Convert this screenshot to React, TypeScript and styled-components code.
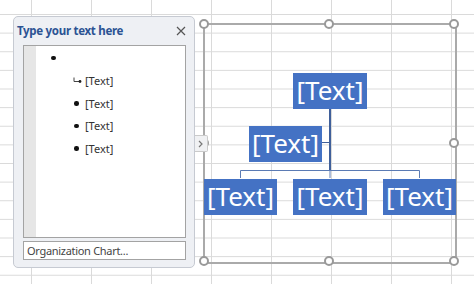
import styled, { createGlobalStyle } from "styled-components";

const GlobalStyle = createGlobalStyle`
    html, body {
        margin: 0;
        padding: 0;
    }
    body {
        width: 474px;
        height: 284px;
        overflow: hidden;
        font-family: "Noto Sans", "Open Sans", Arial, sans-serif;
        background-color: #ffffff;
        background-image:
            linear-gradient(to right, #dadada 1px, transparent 1px),
            linear-gradient(to bottom, #dadada 1px, transparent 1px);
        background-size: 60px 100%, 100% 18.64px;
        background-position: 31px 0, 0 14px;
    }
`

const Pagina = styled.div`
    display: flex;
    align-items: flex-start;
    padding: 16px 0 0 13px;
`

const Painel = styled.div`
    position: relative;
    z-index: 3;
    box-sizing: border-box;
    width: 182px;
    height: 252px;
    display: flex;
    flex-direction: column;
    padding: 0 8px 7px 3px;
    background: #eef0f4;
    border: 1px solid #c6cad2;
    border-radius: 5px;
`

const CabecalhoPainel = styled.div`
    height: 28px;
    display: flex;
    align-items: center;
    justify-content: space-between;
`

const TituloPainel = styled.span`
    font-size: 11.5px;
    font-weight: 700;
    color: #2c5393;
    letter-spacing: -0.3px;
`

const Fechar = styled.svg`
    width: 10px;
    height: 10px;
`

const AreaTexto = styled.div`
    margin-left: 6px;
    height: 193px;
    display: flex;
    background: #ffffff;
    border: 1px solid #a3a3a3;
`

const Faixa = styled.div`
    width: 12px;
    background: #e6e6e6;
`

const Lista = styled.div`
    flex: 1;
    padding-top: 1px;
`

const Linha = styled.div<{ $recuo: number }>`
    height: 22.6px;
    display: flex;
    align-items: center;
    padding-left: ${p => p.$recuo}px;
    font-size: 11px;
    color: #333333;
`

const Marcador = styled.span`
    width: 9px;
    margin-right: 3px;
    display: flex;
    align-items: center;
`

const Ponto = styled.span`
    width: 4.5px;
    height: 4.5px;
    margin-left: 1px;
    border-radius: 50%;
    background: #111111;
`

const CaixaOrganograma = styled.div`
    margin: 3px 0 0 6px;
    height: 19px;
    box-sizing: border-box;
    display: flex;
    align-items: center;
    padding-left: 3px;
    background: #ffffff;
    border: 1px solid #a3a3a3;
    font-size: 11px;
    letter-spacing: -0.3px;
    color: #444444;
`

const Aba = styled.div`
    position: absolute;
    left: calc(100% + 1px);
    top: 118px;
    width: 13px;
    height: 17px;
    box-sizing: border-box;
    display: flex;
    align-items: center;
    justify-content: center;
    padding-right: 2px;
    background: #f0f1f3;
    border: 1px solid #cacaca;
    border-left: none;
    border-radius: 0 2px 2px 0;
`

const Moldura = styled.div`
    position: relative;
    box-sizing: border-box;
    width: 254px;
    height: 241px;
    margin: 7px 0 0 8px;
    border: 2px solid #aaaaaa;
`

const Alca = styled.span<{ $x: string; $y: string }>`
    position: absolute;
    left: ${p => p.$x};
    top: ${p => p.$y};
    width: 10px;
    height: 10px;
    box-sizing: border-box;
    margin: -6px 0 0 -6px;
    border: 2px solid #999999;
    border-radius: 50%;
    background: #ffffff;
    z-index: 2;
`

const Conectores = styled.svg`
    position: absolute;
    left: 0;
    top: 0;
    width: 250px;
    height: 237px;
`

const Organograma = styled.div`
    position: relative;
    display: flex;
    flex-direction: column;
    padding-top: 48px;
`

const LinhaTopo = styled.div`
    display: flex;
    justify-content: center;
`

const LinhaAssistente = styled.div`
    display: flex;
    padding: 17px 0 0 44px;
`

const LinhaBase = styled.div`
    display: flex;
    justify-content: space-between;
    margin: 17px -1px 0 -1px;
`

const Caixa = styled.div<{ $largura: number }>`
    position: relative;
    width: ${p => p.$largura}px;
    height: 36px;
    display: flex;
    align-items: center;
    justify-content: center;
    background: #4472c4;
    color: #ffffff;
    font-size: 26px;
    line-height: 1;
    padding-bottom: 3px;
    box-sizing: border-box;
`

export default function App() {
    const itens = [
        { recuo: 14, tipo: "ponto", texto: "" },
        { recuo: 37, tipo: "seta", texto: "[Text]" },
        { recuo: 37, tipo: "ponto", texto: "[Text]" },
        { recuo: 37, tipo: "ponto", texto: "[Text]" },
        { recuo: 37, tipo: "ponto", texto: "[Text]" },
    ]

    return (
        <>
            <GlobalStyle />
            <Pagina>
                <Painel>
                    <CabecalhoPainel>
                        <TituloPainel>Type your text here</TituloPainel>
                        <Fechar viewBox="0 0 10 10">
                            <path d="M1 1L9 9M9 1L1 9" stroke="#555" strokeWidth="1.2" fill="none" />
                        </Fechar>
                    </CabecalhoPainel>
                    <AreaTexto>
                        <Faixa />
                        <Lista>
                            {itens.map((item, i) => (
                                <Linha key={i} $recuo={item.recuo}>
                                    <Marcador>
                                        {item.tipo === "ponto" ? (
                                            <Ponto />
                                        ) : (
                                            <svg width="9" height="7" viewBox="0 0 9 7">
                                                <path d="M1 0.5V4.5H6" stroke="#444" strokeWidth="1" fill="none" />
                                                <circle cx="7" cy="4.5" r="1.4" fill="#222" />
                                            </svg>
                                        )}
                                    </Marcador>
                                    {item.texto}
                                </Linha>
                            ))}
                        </Lista>
                    </AreaTexto>
                    <CaixaOrganograma>Organization Chart...</CaixaOrganograma>
                    <Aba>
                        <svg width="5" height="8" viewBox="0 0 5 8">
                            <path d="M1 1L4 4L1 7" stroke="#777" strokeWidth="1.2" fill="none" />
                        </svg>
                    </Aba>
                </Painel>

                <Moldura>
                    <Alca $x="0%" $y="0%" />
                    <Alca $x="50%" $y="0%" />
                    <Alca $x="100%" $y="0%" />
                    <Alca $x="0%" $y="50%" />
                    <Alca $x="100%" $y="50%" />
                    <Alca $x="0%" $y="100%" />
                    <Alca $x="50%" $y="100%" />
                    <Alca $x="100%" $y="100%" />

                    <Conectores viewBox="0 0 250 237">
                        <path d="M125 84V145" stroke="#3f5f9a" strokeWidth="2" fill="none" />
                        <path d="M117 117.5H125" stroke="#3f5f9a" strokeWidth="1" fill="none" />
                        <path d="M35.5 153V145.5H214.5V153M125 145.5V153" stroke="#5b7bb4" strokeWidth="1" fill="none" />
                    </Conectores>

                    <Organograma>
                        <LinhaTopo>
                            <Caixa $largura={74}>[Text]</Caixa>
                        </LinhaTopo>
                        <LinhaAssistente>
                            <Caixa $largura={73}>[Text]</Caixa>
                        </LinhaAssistente>
                        <LinhaBase>
                            <Caixa $largura={73}>[Text]</Caixa>
                            <Caixa $largura={74}>[Text]</Caixa>
                            <Caixa $largura={73}>[Text]</Caixa>
                        </LinhaBase>
                    </Organograma>
                </Moldura>
            </Pagina>
        </>
    )
}
